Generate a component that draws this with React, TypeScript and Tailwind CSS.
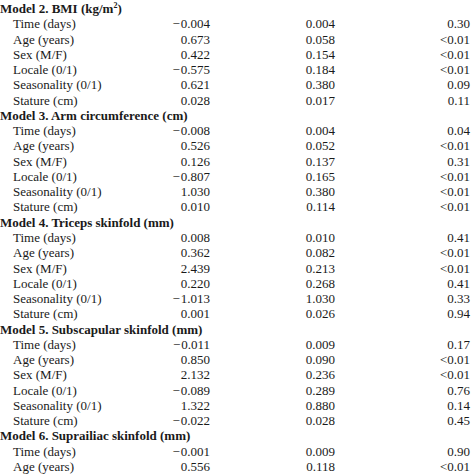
import React from "react";

type Row = [string, string, string, string];

type Model = {
  title: React.ReactNode;
  rows: Row[];
};

const models: Model[] = [
  {
    title: (
      <>
        Model 2. BMI (kg/m<sup className="relative -top-[5px] align-baseline text-[8px]">2</sup>)
      </>
    ),
    rows: [
      ["Time (days)", "\u22120.004", "0.004", "0.30"],
      ["Age (years)", "0.673", "0.058", "<0.01"],
      ["Sex (M/F)", "0.422", "0.154", "<0.01"],
      ["Locale (0/1)", "\u22120.575", "0.184", "<0.01"],
      ["Seasonality (0/1)", "0.621", "0.380", "0.09"],
      ["Stature (cm)", "0.028", "0.017", "0.11"],
    ],
  },
  {
    title: "Model 3. Arm circumference (cm)",
    rows: [
      ["Time (days)", "\u22120.008", "0.004", "0.04"],
      ["Age (years)", "0.526", "0.052", "<0.01"],
      ["Sex (M/F)", "0.126", "0.137", "0.31"],
      ["Locale (0/1)", "\u22120.807", "0.165", "<0.01"],
      ["Seasonality (0/1)", "1.030", "0.380", "<0.01"],
      ["Stature (cm)", "0.010", "0.114", "<0.01"],
    ],
  },
  {
    title: "Model 4. Triceps skinfold (mm)",
    rows: [
      ["Time (days)", "0.008", "0.010", "0.41"],
      ["Age (years)", "0.362", "0.082", "<0.01"],
      ["Sex (M/F)", "2.439", "0.213", "<0.01"],
      ["Locale (0/1)", "0.220", "0.268", "0.41"],
      ["Seasonality (0/1)", "\u22121.013", "1.030", "0.33"],
      ["Stature (cm)", "0.001", "0.026", "0.94"],
    ],
  },
  {
    title: "Model 5. Subscapular skinfold (mm)",
    rows: [
      ["Time (days)", "\u22120.011", "0.009", "0.17"],
      ["Age (years)", "0.850", "0.090", "<0.01"],
      ["Sex (M/F)", "2.132", "0.236", "<0.01"],
      ["Locale (0/1)", "\u22120.089", "0.289", "0.76"],
      ["Seasonality (0/1)", "1.322", "0.880", "0.14"],
      ["Stature (cm)", "\u22120.022", "0.028", "0.45"],
    ],
  },
  {
    title: "Model 6. Suprailiac skinfold (mm)",
    rows: [
      ["Time (days)", "\u22120.001", "0.009", "0.90"],
      ["Age (years)", "0.556", "0.118", "<0.01"],
    ],
  },
];

function Num({ value }: { value: string }) {
  // minus sign sits a little apart from the digits, as in the typeset table
  if (value.startsWith("\u2212")) {
    return (
      <>
        {"\u2212"}
        <span className="ml-[1px]">{value.slice(1)}</span>
      </>
    );
  }
  return <>{value}</>;
}

export default function App() {
  return (
    <div
      className="h-[474px] w-[474px] overflow-hidden bg-white pt-[1px] text-[13px] leading-[15.27px] text-[#1a1a1a]"
      style={{ fontFamily: '"Liberation Serif", "Times New Roman", serif' }}
    >
      {models.map((model, i) => (
        <div key={i}>
          <div className="whitespace-nowrap font-bold">{model.title}</div>
          {model.rows.map((row) => (
            <div key={row[0]} className="grid grid-cols-[150px_60px_125px_135px] whitespace-nowrap">
              <span className="pl-[13px]">{row[0]}</span>
              <span className="text-right">
                <Num value={row[1]} />
              </span>
              <span className="text-right">{row[2]}</span>
              <span className="text-right">{row[3]}</span>
            </div>
          ))}
        </div>
      ))}
    </div>
  );
}
